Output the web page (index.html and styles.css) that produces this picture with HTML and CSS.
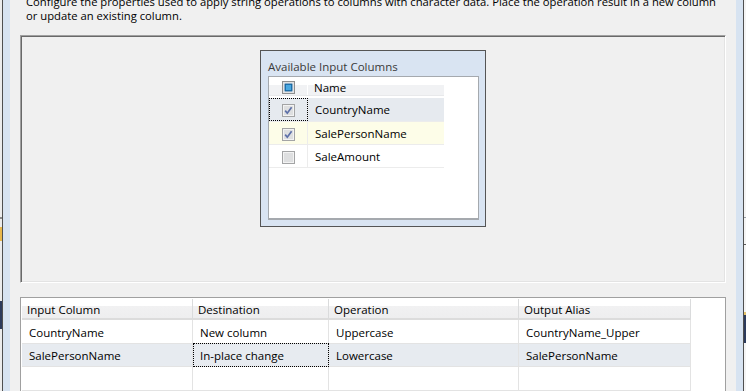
FILE: index.html
```html
<!DOCTYPE html>
<html>
<head>
<meta charset="utf-8">
<link rel="stylesheet" href="styles.css">
</head>
<body>
<div class="screen">
  <div class="edge-left">
    <div class="edge-outer">
      <span class="bit bit-gap1"></span>
      <span class="bit bit-line"></span>
      <span class="bit bit-yellow"></span>
      <span class="bit bit-gap2"></span>
      <span class="bit bit-navy"></span>
    </div>
    <div class="edge-dark"></div>
    <div class="edge-blue"></div>
  </div>

  <main class="main">
    <p class="intro">Configure the properties used to apply string operations to columns with character data. Place the operation result in a new column<br>or update an existing column.</p>

    <section class="panel">
      <div class="groupbox">
        <div class="gb-title">Available Input Columns</div>
        <div class="listbox">
          <div class="lv-header">
            <div class="lv-check">
              <svg class="cb" width="13" height="13" viewBox="0 0 13 13">
                <rect x="0.5" y="0.5" width="12" height="12" fill="#f4f4f4" stroke="#8e8f8f"/>
                <rect x="1.5" y="1.5" width="10" height="10" fill="#fff" stroke="#e2e2e2"/>
                <rect x="3" y="3" width="7" height="7" fill="#2386c8" stroke="#1a5d91" stroke-width="1"/>
                <rect x="4" y="4" width="5" height="5" fill="#4aa8e0"/>
              </svg>
            </div>
            <div class="lv-name">Name</div>
          </div>
          <div class="lv-row row-focus row-first">
            <div class="lv-check focus">
              <svg class="cb" width="13" height="13" viewBox="0 0 13 13">
                <rect x="0.5" y="0.5" width="12" height="12" fill="#e9e9e9" stroke="#a3a4a5"/>
                <rect x="1.5" y="1.5" width="10" height="10" fill="#dedfe0" stroke="#f3f3f3"/>
                <path d="M3.2 6.6 L5.3 9.2 L9.6 3.3" fill="none" stroke="#5d70a8" stroke-width="1.7"/>
              </svg>
            </div>
            <div class="lv-name">CountryName</div>
          </div>
          <div class="lv-row row-hover">
            <div class="lv-check">
              <svg class="cb" width="13" height="13" viewBox="0 0 13 13">
                <rect x="0.5" y="0.5" width="12" height="12" fill="#e9e9e9" stroke="#a3a4a5"/>
                <rect x="1.5" y="1.5" width="10" height="10" fill="#dedfe0" stroke="#f3f3f3"/>
                <path d="M3.2 6.6 L5.3 9.2 L9.6 3.3" fill="none" stroke="#5d70a8" stroke-width="1.7"/>
              </svg>
            </div>
            <div class="lv-name">SalePersonName</div>
          </div>
          <div class="lv-row">
            <div class="lv-check">
              <svg class="cb" width="13" height="13" viewBox="0 0 13 13">
                <rect x="0.5" y="0.5" width="12" height="12" fill="#e9e9e9" stroke="#a3a4a5"/>
                <rect x="1.5" y="1.5" width="10" height="10" fill="#dedfe0" stroke="#f3f3f3"/>
              </svg>
            </div>
            <div class="lv-name">SaleAmount</div>
          </div>
        </div>
      </div>
    </section>

    <section class="grid">
      <div class="gr gr-head">
        <div class="gh">Input Column</div>
        <div class="gh">Destination</div>
        <div class="gh">Operation</div>
        <div class="gh">Output Alias</div>
      </div>
      <div class="gr gr-first">
        <div class="gc">CountryName</div>
        <div class="gc">New column</div>
        <div class="gc">Uppercase</div>
        <div class="gc">CountryName_Upper</div>
      </div>
      <div class="gr gr-alt">
        <div class="gc">SalePersonName</div>
        <div class="gc focus">In-place change</div>
        <div class="gc">Lowercase</div>
        <div class="gc">SalePersonName</div>
      </div>
      <div class="gr">
        <div class="gc"></div>
        <div class="gc"></div>
        <div class="gc"></div>
        <div class="gc"></div>
      </div>
    </section>
  </main>

  <div class="edge-right">
    <div class="edge-blue"></div>
    <div class="edge-dark"></div>
    <div class="edge-outer right-outer">
      <span class="bit r-gap1"></span>
      <span class="bit r-line1"></span>
      <span class="bit r-gap2"></span>
      <span class="bit r-line2"></span>
      <span class="bit r-gap3"></span>
      <span class="bit r-yellow"></span>
      <span class="bit r-navy"></span>
    </div>
  </div>
</div>
</body>
</html>
```

FILE: styles.css
```css
* { box-sizing: border-box; }

html, body {
  margin: 0;
  padding: 0;
  background: #f0f0f0;
}

body {
  font-family: "Open Sans", "Liberation Sans", sans-serif;
  font-size: 11.5px;
  color: #000;
}

.screen {
  display: flex;
  width: 746px;
  height: 391px;
  overflow: hidden;
  background: #f0f0f0;
}

/* window edges */
.edge-left, .edge-right {
  display: flex;
  flex: none;
  height: 391px;
}
.edge-outer {
  display: flex;
  flex-direction: column;
  width: 2px;
  background: #ececec;
}
.edge-dark {
  width: 1px;
  background: #4f4f4f;
}
.edge-blue {
  width: 7px;
  background: #d7e3f1;
}
.bit { display: block; flex: none; }
.bit-gap1 { height: 217px; }
.bit-line { height: 2px; background: #8a8a8a; }
.bit-yellow { height: 14px; background: #e9b84d; margin-top: 8px; }
.bit-gap2 { height: 60px; }
.bit-navy { height: 28px; background: #2d3b5c; }

.right-outer { width: 2px; background: #f4f4f4; }
.r-gap1 { height: 217px; }
.r-line1 { height: 1px; background: #9aa0a8; }
.r-gap2 { height: 26px; }
.r-line2 { height: 1px; background: #5a5a5a; }
.r-gap3 { height: 67px; }
.r-yellow { height: 3px; background: #e6c36a; }
.r-navy { height: 28px; background: #2d3b5c; }

/* main column */
.main {
  flex: none;
  width: 726px;
  display: flex;
  flex-direction: column;
}

.intro {
  margin: -5px 0 0 0;
  padding-left: 16px;
  font-size: 11.25px;
  line-height: 14px;
  white-space: nowrap;
}

.panel {
  margin: 12px 10px 0 10px;
  height: 249px;
  border: 1px solid;
  border-color: #a0a0a0 #ffffff #ffffff #a0a0a0;
  box-shadow: inset 1px 1px 0 #696969, inset -1px -1px 0 #e3e3e3;
  display: flex;
  justify-content: center;
  padding-top: 14px;
}

.groupbox {
  width: 226px;
  height: 177px;
  border: 1px solid #555;
  background: #d9e4f2;
  padding: 0 6px 6px 7px;
  display: flex;
  flex-direction: column;
}

.gb-title {
  color: #3a3a3a;
  height: 25px;
  line-height: 32px;
  white-space: nowrap;
}

.listbox {
  flex: 1;
  background: #fff;
  border: 1px solid #a5a9ae;
  border-bottom-width: 2px;
}

.lv-header {
  display: flex;
  width: 175px;
  height: 19px;
  margin-bottom: 2px;
  background: linear-gradient(#ffffff 0, #ffffff 45%, #f1f2f4 45%, #f1f2f4 100%);
  border-bottom: 1px solid #e8e9eb;
}
.lv-header .lv-check { border-right: 1px solid #fff; padding-top: 2px; }
.lv-header .lv-name { line-height: 18px; padding-left: 6px; padding-top: 2px; }

.lv-row {
  display: flex;
  width: 175px;
  height: 23px;
  border-bottom: 1px solid #ececec;
}
.row-first { height: 24px; }
.lv-row .lv-check { border-right: 1px solid #ececec; padding-top: 2px; }
.row-focus { background: #e6eaef; }
.row-hover { background: #fdfde8; }

.lv-check {
  width: 39px;
  flex: none;
  display: flex;
  align-items: center;
  justify-content: center;
}
.lv-check.focus { outline: 1px dotted #000; outline-offset: -1px; }
.lv-name {
  flex: 1;
  padding-left: 7px;
  padding-top: 2px;
  line-height: 20px;
  white-space: nowrap;
}
.cb { display: block; }

/* bottom grid */
.grid {
  margin: 14px 10px 0 10px;
  flex: 1;
  background: #fff;
  border: 1px solid #a0a0a0;
  border-bottom: none;
  padding: 1px 0 0 1px;
}

.gr {
  display: grid;
  grid-template-columns: 171px 136px 190px 172px;
  width: 669px;
  height: 24px;
}
.gr-head {
  height: 21px;
  background: linear-gradient(#ffffff 0, #ffffff 35%, #f1f1f2 35%, #eeeeef 100%);
  border-bottom: 2px solid #dcdcdc;
}
.gr-first { height: 23px; }
.gh {
  padding-left: 5px;
  padding-top: 1px;
  line-height: 19px;
  border-right: 1px solid #dadbdc;
  white-space: nowrap;
}
.gc {
  padding-left: 7px;
  padding-top: 2px;
  line-height: 21px;
  border-right: 1px solid #e3e3e3;
  border-bottom: 1px solid #e3e3e3;
  white-space: nowrap;
}
.gr-alt { background: #e7ebf0; }
.gc.focus { outline: 1px dotted #000; outline-offset: -1px; }
```
